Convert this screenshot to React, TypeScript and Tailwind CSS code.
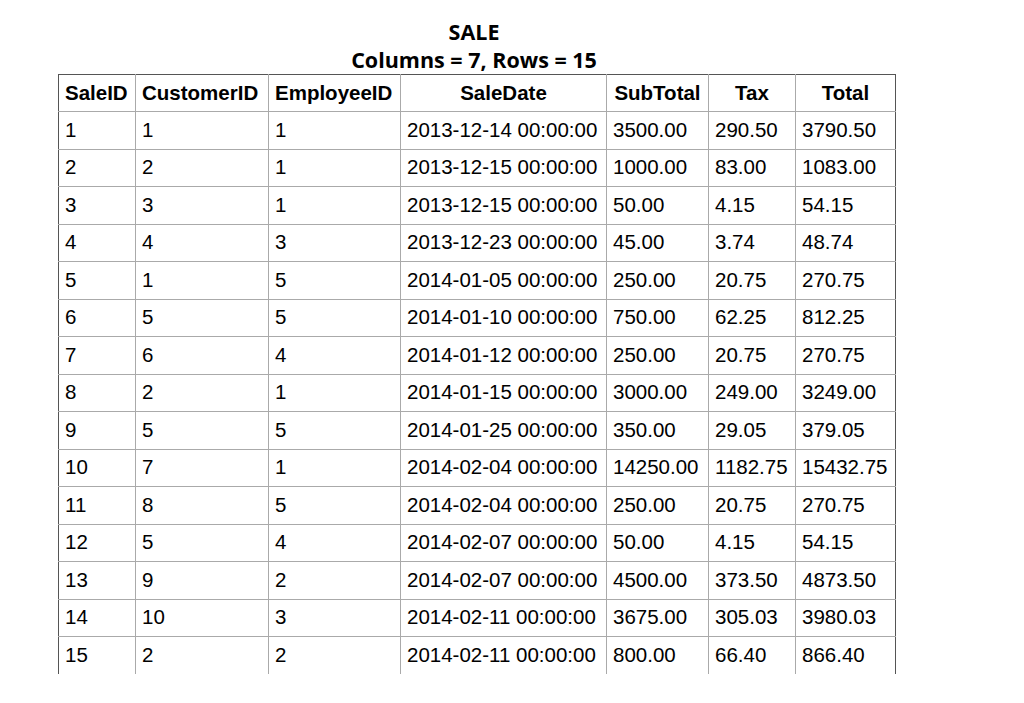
const rows = [
["1","1","1","2013-12-14 00:00:00","3500.00","290.50","3790.50"],
["2","2","1","2013-12-15 00:00:00","1000.00","83.00","1083.00"],
["3","3","1","2013-12-15 00:00:00","50.00","4.15","54.15"],
["4","4","3","2013-12-23 00:00:00","45.00","3.74","48.74"],
["5","1","5","2014-01-05 00:00:00","250.00","20.75","270.75"],
["6","5","5","2014-01-10 00:00:00","750.00","62.25","812.25"],
["7","6","4","2014-01-12 00:00:00","250.00","20.75","270.75"],
["8","2","1","2014-01-15 00:00:00","3000.00","249.00","3249.00"],
["9","5","5","2014-01-25 00:00:00","350.00","29.05","379.05"],
["10","7","1","2014-02-04 00:00:00","14250.00","1182.75","15432.75"],
["11","8","5","2014-02-04 00:00:00","250.00","20.75","270.75"],
["12","5","4","2014-02-07 00:00:00","50.00","4.15","54.15"],
["13","9","2","2014-02-07 00:00:00","4500.00","373.50","4873.50"],
["14","10","3","2014-02-11 00:00:00","3675.00","305.03","3980.03"],
["15","2","2","2014-02-11 00:00:00","800.00","66.40","866.40"],
];
const heads = ["SaleID","CustomerID","EmployeeID","SaleDate","SubTotal","Tax","Total"];
const widths = [77,133,132,206,102,87,100];
export default function App() {
  return (
    <div className="w-[1024px] h-[703px] bg-white text-black" style={{fontFamily:'"Liberation Sans", Arial, sans-serif'}}>
      <div className="pt-[18px] text-center font-bold text-[21.5px] leading-[28px]" style={{fontFamily:'"Open Sans", Lato, sans-serif'}}>
        <div className="ml-[-76px]">SALE</div>
        <div className="ml-[-76px]">Columns = 7, Rows = 15</div>
      </div>
      <table className="ml-[58px] border-collapse border-l border-t border-r border-[#555] text-[20.5px]" style={{tableLayout:'fixed'}}>
        <colgroup>{widths.map((w,i)=><col key={i} style={{width:w}} />)}</colgroup>
        <thead>
          <tr className="h-[37px]">
            {heads.map((h,i)=><th key={i} className={`border-b border-[#aaa] ${i<6?'border-r':''} px-[6px] font-bold whitespace-nowrap ${i<3?'text-left':'text-center'}`}>{h}</th>)}
          </tr>
        </thead>
        <tbody>
          {rows.map((r,ri)=>(
            <tr key={ri} className="h-[37.5px]">
              {r.map((c,ci)=><td key={ci} className={`${ri<14?'border-b':''} border-[#aaa] ${ci<6?'border-r':''} px-[6px] whitespace-nowrap`}>{c}</td>)}
            </tr>
          ))}
        </tbody>
      </table>
    </div>
  );
}
